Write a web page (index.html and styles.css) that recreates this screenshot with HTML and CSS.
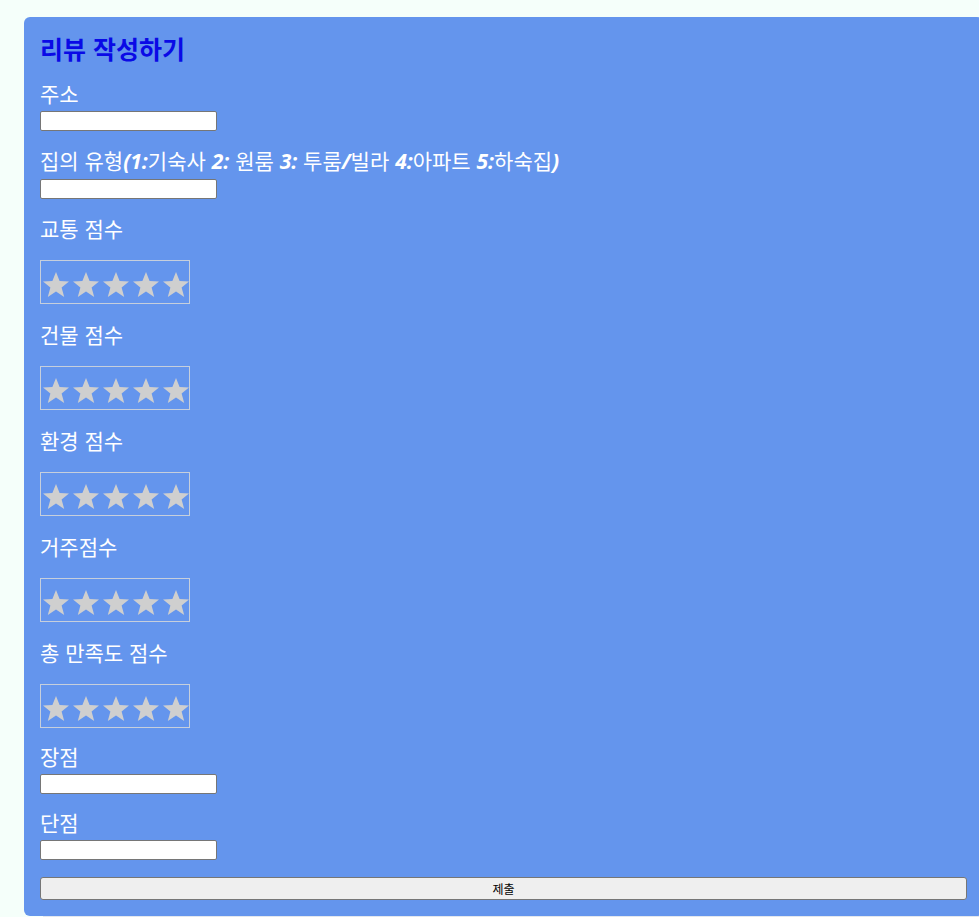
FILE: index.html
```html
<!DOCTYPE html>
<html lang="ko">
<head>
<meta charset="utf-8">
<title>리뷰 작성하기</title>
<link rel="stylesheet" href="styles.css">
</head>
<body>
<form class="card">
  <h2 class="title">리뷰 작성하기</h2>

  <div class="field first">
    <label class="label">주소</label>
    <input class="text" type="text">
  </div>

  <div class="field">
    <label class="label">집의 유형<b class="num">(1:</b>기숙사 <b class="num">2:</b> 원룸 <b class="num">3:</b> 투룸<b class="num">/</b>빌라 <b class="num">4:</b>아파트 <b class="num">5:</b>하숙집<b class="num">)</b></label>
    <input class="text" type="text">
  </div>

  <div class="field star-field">
    <label class="label">교통 점수</label>
    <div class="stars">
      <svg class="star" viewBox="0 0 30 30"><polygon points="15,2 18.6,11 28,11.4 20.6,17.4 23.2,27 15,21.6 6.8,27 9.4,17.4 2,11.4 11.4,11"/></svg>
      <svg class="star" viewBox="0 0 30 30"><polygon points="15,2 18.6,11 28,11.4 20.6,17.4 23.2,27 15,21.6 6.8,27 9.4,17.4 2,11.4 11.4,11"/></svg>
      <svg class="star" viewBox="0 0 30 30"><polygon points="15,2 18.6,11 28,11.4 20.6,17.4 23.2,27 15,21.6 6.8,27 9.4,17.4 2,11.4 11.4,11"/></svg>
      <svg class="star" viewBox="0 0 30 30"><polygon points="15,2 18.6,11 28,11.4 20.6,17.4 23.2,27 15,21.6 6.8,27 9.4,17.4 2,11.4 11.4,11"/></svg>
      <svg class="star" viewBox="0 0 30 30"><polygon points="15,2 18.6,11 28,11.4 20.6,17.4 23.2,27 15,21.6 6.8,27 9.4,17.4 2,11.4 11.4,11"/></svg>
    </div>
  </div>

  <div class="field star-field">
    <label class="label">건물 점수</label>
    <div class="stars">
      <svg class="star" viewBox="0 0 30 30"><polygon points="15,2 18.6,11 28,11.4 20.6,17.4 23.2,27 15,21.6 6.8,27 9.4,17.4 2,11.4 11.4,11"/></svg>
      <svg class="star" viewBox="0 0 30 30"><polygon points="15,2 18.6,11 28,11.4 20.6,17.4 23.2,27 15,21.6 6.8,27 9.4,17.4 2,11.4 11.4,11"/></svg>
      <svg class="star" viewBox="0 0 30 30"><polygon points="15,2 18.6,11 28,11.4 20.6,17.4 23.2,27 15,21.6 6.8,27 9.4,17.4 2,11.4 11.4,11"/></svg>
      <svg class="star" viewBox="0 0 30 30"><polygon points="15,2 18.6,11 28,11.4 20.6,17.4 23.2,27 15,21.6 6.8,27 9.4,17.4 2,11.4 11.4,11"/></svg>
      <svg class="star" viewBox="0 0 30 30"><polygon points="15,2 18.6,11 28,11.4 20.6,17.4 23.2,27 15,21.6 6.8,27 9.4,17.4 2,11.4 11.4,11"/></svg>
    </div>
  </div>

  <div class="field star-field">
    <label class="label">환경 점수</label>
    <div class="stars">
      <svg class="star" viewBox="0 0 30 30"><polygon points="15,2 18.6,11 28,11.4 20.6,17.4 23.2,27 15,21.6 6.8,27 9.4,17.4 2,11.4 11.4,11"/></svg>
      <svg class="star" viewBox="0 0 30 30"><polygon points="15,2 18.6,11 28,11.4 20.6,17.4 23.2,27 15,21.6 6.8,27 9.4,17.4 2,11.4 11.4,11"/></svg>
      <svg class="star" viewBox="0 0 30 30"><polygon points="15,2 18.6,11 28,11.4 20.6,17.4 23.2,27 15,21.6 6.8,27 9.4,17.4 2,11.4 11.4,11"/></svg>
      <svg class="star" viewBox="0 0 30 30"><polygon points="15,2 18.6,11 28,11.4 20.6,17.4 23.2,27 15,21.6 6.8,27 9.4,17.4 2,11.4 11.4,11"/></svg>
      <svg class="star" viewBox="0 0 30 30"><polygon points="15,2 18.6,11 28,11.4 20.6,17.4 23.2,27 15,21.6 6.8,27 9.4,17.4 2,11.4 11.4,11"/></svg>
    </div>
  </div>

  <div class="field star-field">
    <label class="label">거주점수</label>
    <div class="stars">
      <svg class="star" viewBox="0 0 30 30"><polygon points="15,2 18.6,11 28,11.4 20.6,17.4 23.2,27 15,21.6 6.8,27 9.4,17.4 2,11.4 11.4,11"/></svg>
      <svg class="star" viewBox="0 0 30 30"><polygon points="15,2 18.6,11 28,11.4 20.6,17.4 23.2,27 15,21.6 6.8,27 9.4,17.4 2,11.4 11.4,11"/></svg>
      <svg class="star" viewBox="0 0 30 30"><polygon points="15,2 18.6,11 28,11.4 20.6,17.4 23.2,27 15,21.6 6.8,27 9.4,17.4 2,11.4 11.4,11"/></svg>
      <svg class="star" viewBox="0 0 30 30"><polygon points="15,2 18.6,11 28,11.4 20.6,17.4 23.2,27 15,21.6 6.8,27 9.4,17.4 2,11.4 11.4,11"/></svg>
      <svg class="star" viewBox="0 0 30 30"><polygon points="15,2 18.6,11 28,11.4 20.6,17.4 23.2,27 15,21.6 6.8,27 9.4,17.4 2,11.4 11.4,11"/></svg>
    </div>
  </div>

  <div class="field star-field">
    <label class="label">총 만족도 점수</label>
    <div class="stars">
      <svg class="star" viewBox="0 0 30 30"><polygon points="15,2 18.6,11 28,11.4 20.6,17.4 23.2,27 15,21.6 6.8,27 9.4,17.4 2,11.4 11.4,11"/></svg>
      <svg class="star" viewBox="0 0 30 30"><polygon points="15,2 18.6,11 28,11.4 20.6,17.4 23.2,27 15,21.6 6.8,27 9.4,17.4 2,11.4 11.4,11"/></svg>
      <svg class="star" viewBox="0 0 30 30"><polygon points="15,2 18.6,11 28,11.4 20.6,17.4 23.2,27 15,21.6 6.8,27 9.4,17.4 2,11.4 11.4,11"/></svg>
      <svg class="star" viewBox="0 0 30 30"><polygon points="15,2 18.6,11 28,11.4 20.6,17.4 23.2,27 15,21.6 6.8,27 9.4,17.4 2,11.4 11.4,11"/></svg>
      <svg class="star" viewBox="0 0 30 30"><polygon points="15,2 18.6,11 28,11.4 20.6,17.4 23.2,27 15,21.6 6.8,27 9.4,17.4 2,11.4 11.4,11"/></svg>
    </div>
  </div>

  <div class="field tight">
    <label class="label">장점</label>
    <input class="text" type="text">
  </div>

  <div class="field tight">
    <label class="label">단점</label>
    <input class="text" type="text">
  </div>

  <button class="submit" type="button">제출</button>
</form>
<div class="below"></div>
</body>
</html>
```

FILE: styles.css
```css
html, body {
  margin: 0;
  padding: 0;
  overflow: hidden;
}

body {
  background: #f5fffa;
  font-family: "Noto Sans CJK KR", "Noto Sans", sans-serif;
  width: 979px;
  height: 917px;
}

.card {
  display: block;
  margin: 17px 0 0 24px;
  width: 927px;
  padding: 16px;
  background: #6495ed;
  border-radius: 6px;
}

.title {
  margin: 0;
  font-size: 25px;
  line-height: 30px;
  font-weight: 700;
  color: #0a0ae6;
}

.field {
  display: flex;
  flex-direction: column;
  align-items: flex-start;
  margin-top: 16px;
}

.field.first {
  margin-top: 17px;
}

.field.tight {
  margin-top: 15px;
}

.label {
  display: block;
  font-size: 21px;
  line-height: 27px;
  padding-bottom: 4px;
  color: #ffffff;
  white-space: nowrap;
}

.num {
  font-style: italic;
  font-weight: 700;
  font-family: "Open Sans", "Noto Sans", sans-serif;
  font-size: 21px;
}

.text {
  box-sizing: border-box;
  width: 177px;
  height: 20px;
  margin: 0;
  padding: 1px 2px;
  border: 1px solid #767676;
  border-radius: 2px;
  background: #ffffff;
}

.stars {
  box-sizing: border-box;
  width: 150px;
  height: 44px;
  margin-top: 14px;
  border: 1px solid #c6cfdc;
  display: flex;
  align-items: flex-end;
  padding: 0 0 3px 0;
}

.star {
  width: 30px;
  height: 30px;
  flex: none;
  fill: #cfcfcf;
}

.star-field + .star-field {
  margin-top: 17px;
}

.submit {
  display: block;
  box-sizing: border-box;
  width: 927px;
  height: 23px;
  margin-top: 17px;
  padding: 0;
  border: 1px solid #767676;
  border-radius: 3px;
  background: #efefef;
  font-family: "Noto Sans CJK KR", sans-serif;
  font-size: 12px;
  color: #000;
}

.below {
  margin-left: 43px;
  height: 4px;
  background: #e2e7ee;
}
```
